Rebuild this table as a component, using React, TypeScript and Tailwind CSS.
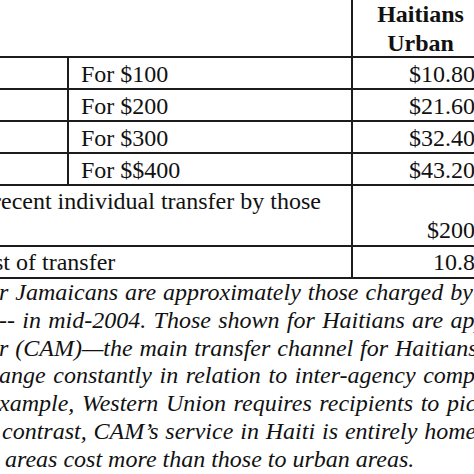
const serif = { fontFamily: '"Liberation Serif", "Times New Roman", serif' };

const rows = [
  { label: "For $100", value: "$10.80" },
  { label: "For $200", value: "$21.60" },
  { label: "For $300", value: "$32.40" },
  { label: "For $$400", value: "$43.20" },
];

// footnote is justified in the source, so each line gets its own word spacing
const notes = [
  { text: "r Jamaicans are approximately those charged by Western Union", cls: "ml-[-1px] [word-spacing:1px]" },
  { text: "-- in mid-2004. Those shown for Haitians are approximately", cls: "ml-[-1px] [word-spacing:1.3px]" },
  { text: "r (CAM)\u2014the main transfer channel for Haitians", cls: "ml-[-1px] [word-spacing:0.9px]" },
  { text: "ange constantly in relation to inter-agency competition", cls: "ml-[-1px] [word-spacing:1.6px]" },
  { text: "xample, Western Union requires recipients to pick up", cls: "ml-[-1px] [word-spacing:1.6px]" },
  { text: "contrast, CAM\u2019s service in Haiti is entirely home delivery", cls: "ml-[2px] [word-spacing:0.9px]" },
  { text: "areas cost more than those to urban areas.", cls: "ml-[5px]" },
];

export default function App() {
  return (
    <div
      className="w-[474px] h-[474px] overflow-hidden bg-white text-[#111] text-[24px]"
      style={serif}
    >
      <div className="w-[490px]">
        {/* header */}
        <div className="flex h-[58px] border-b-2 border-[#1c1c1c]">
          <div className="w-[353px] shrink-0 border-r-2 border-[#1c1c1c]" />
          <div className="w-[135px] shrink-0 text-center font-bold leading-[29px]">
            <div>Haitians</div>
            <div>Urban</div>
          </div>
        </div>

        {rows.map((r) => (
          <div key={r.label} className="flex h-[32px] border-b-2 border-[#1c1c1c]">
            <div className="w-[69px] shrink-0 border-r-2 border-[#1c1c1c]" />
            <div className="w-[284px] shrink-0 border-r-2 border-[#1c1c1c] pl-[12px] pt-[3px] leading-[27px]">
              {r.label}
            </div>
            <div className="w-[135px] shrink-0 pr-[13px] pt-[3px] text-right leading-[27px]">
              {r.value}
            </div>
          </div>
        ))}

        <div className="flex h-[61px] border-b-2 border-[#1c1c1c]">
          <div className="w-[353px] shrink-0 overflow-hidden border-r-2 border-[#1c1c1c] pt-[2px] leading-[27px] whitespace-nowrap">
            <span className="ml-[-7px]">recent individual transfer by those</span>
          </div>
          <div className="flex w-[135px] shrink-0 items-end justify-end pr-[13px] pb-[1px] leading-[27px]">
            $200
          </div>
        </div>

        <div className="flex h-[32px] border-b-2 border-[#1c1c1c]">
          <div className="w-[353px] shrink-0 overflow-hidden border-r-2 border-[#1c1c1c] pt-[2px] leading-[27px] whitespace-nowrap">
            <span className="ml-[-34px]">Cost of transfer</span>
          </div>
          <div className="w-[135px] shrink-0 pr-[13px] pt-[2px] text-right leading-[27px]">
            10.8
          </div>
        </div>
      </div>

      {/* footnote */}
      <div className="italic leading-[27.8px]">
        {notes.map((n) => (
          <div key={n.text} className={`whitespace-nowrap ${n.cls}`}>
            {n.text}
          </div>
        ))}
      </div>
    </div>
  );
}
